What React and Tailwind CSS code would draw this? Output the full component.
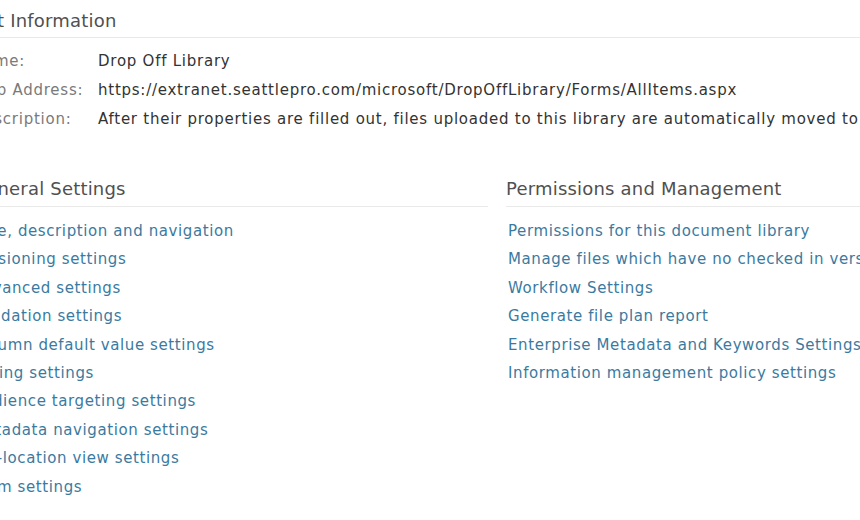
const INFO = [
  { label: 'Name:', value: 'Drop Off Library' },
  { label: 'Web Address:', value: 'https://extranet.seattlepro.com/microsoft/DropOffLibrary/Forms/AllItems.aspx' },
  {
    label: 'Description:',
    value: 'After their properties are filled out, files uploaded to this library are automatically moved to the correct library or folder.',
  },
];

const GENERAL = [
  'Title, description and navigation',
  'Versioning settings',
  'Advanced settings',
  'Validation settings',
  'Column default value settings',
  'Rating settings',
  'Audience targeting settings',
  'Metadata navigation settings',
  'Per-location view settings',
  'Form settings',
];

const PERMISSIONS = [
  'Permissions for this document library',
  'Manage files which have no checked in version',
  'Workflow Settings',
  'Generate file plan report',
  'Enterprise Metadata and Keywords Settings',
  'Information management policy settings',
];

function Section({ title, links, className, linkClass }) {
  return (
    <div className={className}>
      <h3 className="h-[34px] border-b border-[#e9e9e9] pt-[4px] text-[18px] leading-[24px] font-normal tracking-[0.2px] text-[#505050]">{title}</h3>
      <ul className="pt-[10px]">
        {links.map((l) => (
          <li key={l} className={`h-[28.4px] whitespace-nowrap text-[15px] leading-[28px] tracking-[0.6px] text-[#3b7aa0] ${linkClass}`}>
            <a href="#">{l}</a>
          </li>
        ))}
      </ul>
    </div>
  );
}

export default function App() {
  return (
    <div className="h-[520px] w-[860px] overflow-hidden bg-white" style={{ fontFamily: '"DejaVu Sans", Verdana, sans-serif' }}>
      <div className="ml-[-28px] w-[1100px]">
        <h2 className="h-[38px] border-b border-[#e9e9e9] pt-[9px] text-[18px] leading-[24px] font-normal tracking-[0.2px] text-[#505050]">List Information</h2>
        <div className="pt-[9px]">
          {INFO.map((r) => (
            <div key={r.label} className="flex h-[29px] whitespace-nowrap text-[15px] leading-[28px] tracking-[0.75px]">
              <div className="w-[126px] shrink-0 text-[#7a7a7a]">{r.label}</div>
              <div className="text-[#333]">{r.value}</div>
            </div>
          ))}
        </div>
        <div className="mt-[39px] flex">
          <Section title="General Settings" links={GENERAL} className="mr-[9px] w-[516px]" linkClass="pl-0" />
          <Section title="Permissions and Management" links={PERMISSIONS} className="flex-1 pl-[9px]" linkClass="pl-[2px]" />
        </div>
      </div>
    </div>
  );
}
